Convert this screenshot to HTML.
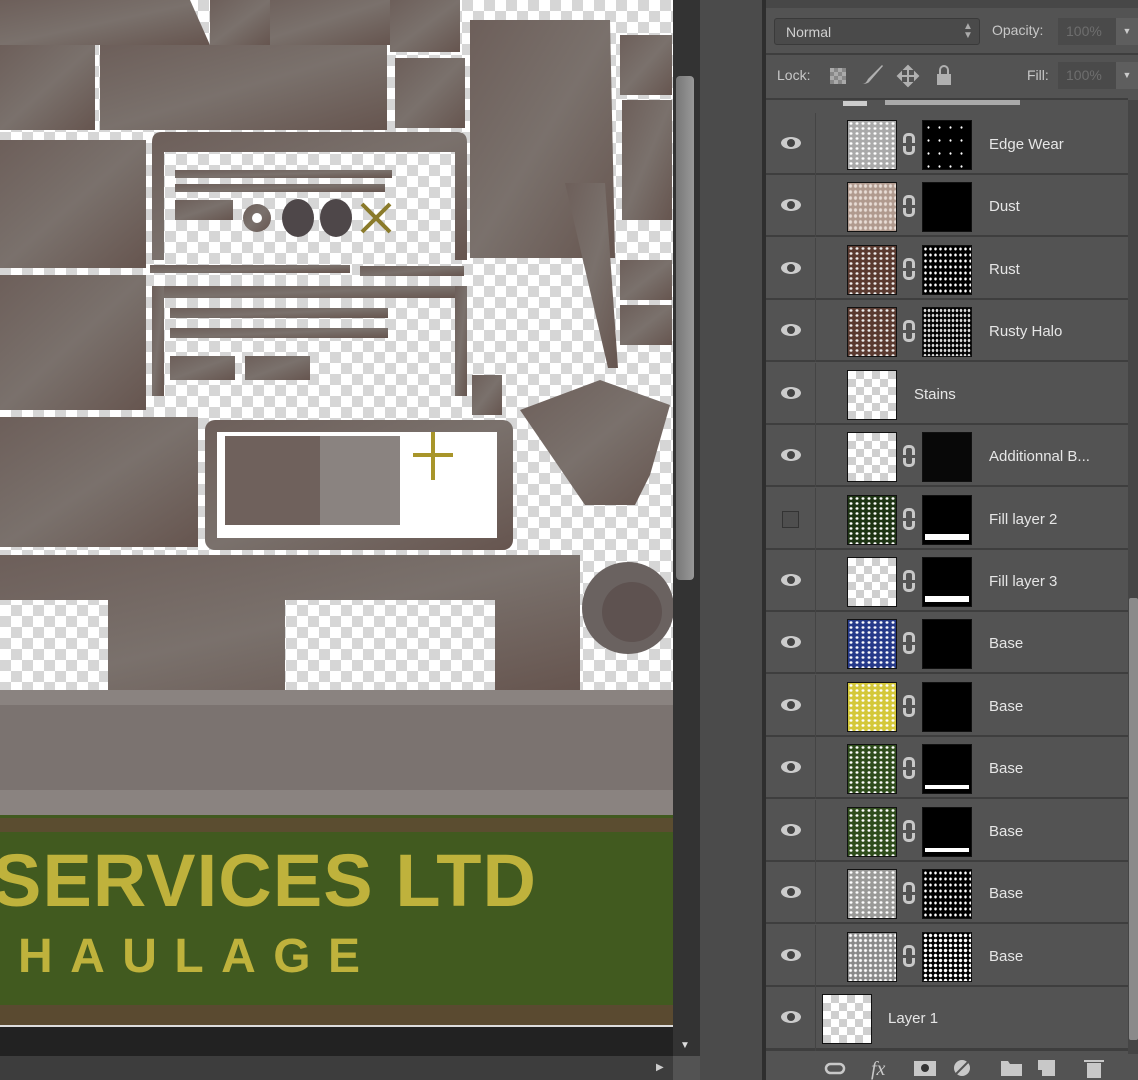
<!DOCTYPE html>
<html><head><meta charset="utf-8"><style>
*{margin:0;padding:0;box-sizing:border-box}
body{width:1138px;height:1080px;overflow:hidden;background:#535353;position:relative;font-family:"Liberation Sans",sans-serif}
.a{position:absolute}
.row{position:absolute;left:766px;width:362px;height:62px;border-bottom:2px solid #3e3e3e;background:#535353}
.eye{position:absolute;left:14px;top:22px;width:22px;height:16px}
.vl{position:absolute;left:49px;top:0;width:1px;height:62px;background:#444}
.th{position:absolute;left:81px;top:7px;width:50px;height:50px;border:1px solid #111}
.mk{position:absolute;left:156px;top:7px;width:50px;height:50px;background:#000;border:1px solid #111}
.ch{position:absolute;left:137px;top:20px;width:12px;height:22px;border:3px solid #c8c8c8;border-radius:5px}
.ch:after{content:"";position:absolute;left:-3px;top:7px;width:12px;height:3px;background:#535353}
.nm{position:absolute;left:223px;top:23px;color:#e6e6e6;font-size:15px}
.chk{background-color:#fff;background-image:repeating-conic-gradient(#cfcfcf 0 25%,#fff 0 50%);background-size:16px 16px}
.btn{position:absolute;background:#4a4a4a;border:1px solid #3a3a3a;border-radius:3px}
</style></head><body>
<svg class="a" style="left:0;top:0" width="673" height="1056" viewBox="0 0 673 1056">
<defs>
<pattern id="ck" width="22" height="22" patternUnits="userSpaceOnUse"><rect width="22" height="22" fill="#fff"/><rect width="11" height="11" fill="#d6d6d6"/><rect x="11" y="11" width="11" height="11" fill="#d6d6d6"/></pattern>
<linearGradient id="gr" x1="0" y1="0" x2="1" y2="1"><stop offset="0" stop-color="#6d5f5a"/><stop offset=".5" stop-color="#7a716c"/><stop offset="1" stop-color="#66554f"/></linearGradient>
</defs>
<rect width="673" height="1056" fill="#222"/>
<rect width="673" height="1027" fill="url(#ck)"/>
<g fill="url(#gr)">
<path d="M0 0h190l20 45h-210z"/><path d="M270 0h120v45h-140z"/><path d="M210 0h60v45h-60z"/>
<rect x="390" y="0" width="70" height="52"/><rect x="395" y="58" width="70" height="70"/>
<rect x="0" y="45" width="95" height="85"/><rect x="100" y="45" width="287" height="85"/>
<path d="M470 20h140l5 238h-145z"/><rect x="620" y="35" width="52" height="60"/>
<rect x="622" y="100" width="50" height="120"/>
<rect x="0" y="140" width="146" height="128"/>
<path d="M152 142q0-10 10-10h295q10 0 10 10v118h-12v-108h-291v108h-12z"/>
<rect x="175" y="170" width="217" height="8"/><rect x="175" y="184" width="210" height="8"/>
<rect x="175" y="200" width="58" height="20"/>
<circle cx="257" cy="218" r="14"/><ellipse cx="298" cy="218" rx="16" ry="19" fill="#4e4749"/><ellipse cx="336" cy="218" rx="16" ry="19" fill="#4e4749"/>
<rect x="152" y="286" width="315" height="12" rx="8"/><rect x="152" y="286" width="12" height="110"/><rect x="455" y="286" width="12" height="110"/>
<rect x="150" y="265" width="200" height="8"/><rect x="360" y="266" width="104" height="10"/>
<rect x="170" y="308" width="218" height="10"/><rect x="170" y="328" width="218" height="10"/>
<rect x="170" y="356" width="65" height="24"/><rect x="245" y="356" width="65" height="24"/>
<rect x="0" y="275" width="146" height="135"/>
<rect x="0" y="417" width="198" height="130"/>
<rect x="205" y="420" width="308" height="130" rx="10"/>
<path d="M565 183l40 0l13 185h-10z"/><rect x="620" y="260" width="52" height="40"/><rect x="620" y="305" width="52" height="40"/>
<path d="M520 410l80-30l70 25l-20 70l-15 30l-50 0z"/>
<rect x="472" y="375" width="30" height="40"/>
<rect x="0" y="555" width="580" height="135"/>
</g>
<rect x="217" y="432" width="280" height="106" fill="#fff"/>
<rect x="225" y="436" width="95" height="89" fill="#6f615c"/>
<rect x="320" y="436" width="80" height="89" fill="#8a8380"/>
<path d="M433 432v48M413 455h40" stroke="#a8952a" stroke-width="4"/>
<path d="M362 204l28 28M390 204l-28 28" stroke="#8a7a2a" stroke-width="4"/>
<circle cx="257" cy="218" r="5" fill="#fff"/>
<rect x="0" y="600" width="108" height="90" fill="url(#ck)"/><rect x="285" y="600" width="210" height="90" fill="url(#ck)"/>
<circle cx="628" cy="608" r="46" fill="#6a6260"/><circle cx="632" cy="612" r="30" fill="#5e5250"/>
<rect x="0" y="690" width="673" height="125" fill="#8a8380"/>
<rect x="0" y="705" width="673" height="85" fill="#7b7370"/>
<rect x="0" y="815" width="673" height="212" fill="#415a1f"/>
<rect x="0" y="818" width="673" height="14" fill="#5b4d30"/>
<rect x="0" y="1005" width="673" height="20" fill="#5a4a30"/>
<rect x="0" y="1025" width="673" height="2" fill="#ddd"/>
<text x="-8" y="906" fill="#bfb23c" font-family="Liberation Sans" font-weight="bold" font-size="74" textLength="544">SERVICES LTD</text>
<text x="18" y="972" fill="#bfb23c" font-family="Liberation Sans" font-weight="bold" font-size="48" textLength="358" letter-spacing="16">HAULAGE</text>
</svg>
<div class="a" style="left:673px;top:0;width:27px;height:1056px;background:#333"></div>
<div class="a" style="left:676px;top:76px;width:18px;height:504px;background:linear-gradient(90deg,#777,#999);border-radius:4px"></div>
<div class="a" style="left:680px;top:1040px;color:#ddd;font-size:10px">▼</div>
<div class="a" style="left:0;top:1056px;width:673px;height:24px;background:#3d3d3d"></div>
<div class="a" style="left:656px;top:1062px;color:#ccc;font-size:10px">▶</div>
<div class="a" style="left:700px;top:0;width:62px;height:1080px;background:#4b4b4b"></div>
<div class="a" style="left:762px;top:0;width:4px;height:1080px;background:#2e2e2e"></div>
<div class="a" style="left:766px;top:0;width:372px;height:1080px;background:#535353"></div>
<div class="a" style="left:766px;top:0;width:372px;height:8px;background:#474747"></div>
<div class="btn" style="left:774px;top:18px;width:206px;height:27px"><span class="a" style="left:11px;top:5px;color:#d0d0d0;font-size:14px">Normal</span><span class="a" style="left:188px;top:3px;color:#aaa;font-size:10px;line-height:9px">▲<br>▼</span></div>
<span class="a" style="left:992px;top:22px;color:#c8c8c8;font-size:14px">Opacity:</span>
<div class="a" style="left:1058px;top:18px;width:58px;height:27px;background:#4a4a4a"><span class="a" style="left:8px;top:5px;color:#6e6e6e;font-size:14px">100%</span></div>
<div class="a" style="left:1116px;top:18px;width:22px;height:27px;background:#5e5e5e;color:#ccc;font-size:9px;text-align:center;line-height:27px">▼</div>
<div class="a" style="left:766px;top:53px;width:372px;height:2px;background:#3e3e3e"></div>
<span class="a" style="left:777px;top:67px;color:#c8c8c8;font-size:14px">Lock:</span>
<div class="a" style="left:830px;top:68px;width:16px;height:16px;background:repeating-conic-gradient(#888 0 25%,#aaa 0 50%) 0 0/8px 8px"></div>
<svg class="a" style="left:858px;top:64px" width="130" height="24"><path d="M4 20q4 0 6-5l14-14l1 1l-13 15q-2 3-8 3z" fill="#b0b0b0"/><path d="M50 2v20M40 12h20M50 2l-3 3h6zM50 22l-3-3h6zM40 12l3-3v6zM60 12l-3-3v6z" stroke="#b0b0b0" stroke-width="2" fill="#b0b0b0"/><rect x="79" y="10" width="14" height="11" fill="#b0b0b0"/><path d="M82 10v-4a4 4 0 0 1 8 0v4" stroke="#b0b0b0" stroke-width="2" fill="none"/></svg>
<span class="a" style="left:1027px;top:67px;color:#c8c8c8;font-size:14px">Fill:</span>
<div class="a" style="left:1058px;top:62px;width:58px;height:27px;background:#4a4a4a"><span class="a" style="left:8px;top:5px;color:#6e6e6e;font-size:14px">100%</span></div>
<div class="a" style="left:1116px;top:62px;width:22px;height:27px;background:#5e5e5e;color:#ccc;font-size:9px;text-align:center;line-height:27px">▼</div>
<div class="a" style="left:766px;top:98px;width:362px;height:2px;background:#3e3e3e"></div>
<div class="a" style="left:843px;top:101px;width:24px;height:5px;background:#ccc"></div>
<div class="a" style="left:885px;top:100px;width:135px;height:5px;background:#aaa"></div>
<div class="a" style="left:1128px;top:100px;width:10px;height:955px;background:#454545"></div>
<div class="a" style="left:1129px;top:598px;width:9px;height:442px;background:#8a8a8a;border-radius:2px"></div>

<div class="row" style="top:113px"><svg class="eye" viewBox="0 0 22 16"><ellipse cx="11" cy="8" rx="10" ry="6" fill="#ccc"/><circle cx="11" cy="8" r="4" fill="#444"/></svg><div class="vl"></div><div class="th" style="background:#aaa;background-image:radial-gradient(#fff 1px,transparent 2px);background-size:6px 5px"></div><div class="ch"></div><div class="mk" style="background-image:radial-gradient(#fff .8px,transparent 1.2px);background-size:11px 13px"></div><span class="nm">Edge Wear</span></div>
<div class="row" style="top:175px"><svg class="eye" viewBox="0 0 22 16"><ellipse cx="11" cy="8" rx="10" ry="6" fill="#ccc"/><circle cx="11" cy="8" r="4" fill="#444"/></svg><div class="vl"></div><div class="th" style="background:#b09a8e;background-image:radial-gradient(#e8ddd6 1px,transparent 2px);background-size:5px 6px"></div><div class="ch"></div><div class="mk"></div><span class="nm">Dust</span></div>
<div class="row" style="top:238px"><svg class="eye" viewBox="0 0 22 16"><ellipse cx="11" cy="8" rx="10" ry="6" fill="#ccc"/><circle cx="11" cy="8" r="4" fill="#444"/></svg><div class="vl"></div><div class="th" style="background:#5a3a30;background-image:radial-gradient(#eee 1px,transparent 2px);background-size:6px 5px"></div><div class="ch"></div><div class="mk" style="background-image:radial-gradient(#fff 1px,transparent 1.5px);background-size:5px 6px"></div><span class="nm">Rust</span></div>
<div class="row" style="top:300px"><svg class="eye" viewBox="0 0 22 16"><ellipse cx="11" cy="8" rx="10" ry="6" fill="#ccc"/><circle cx="11" cy="8" r="4" fill="#444"/></svg><div class="vl"></div><div class="th" style="background:#5a3a30;background-image:radial-gradient(#eee 1px,transparent 2px);background-size:6px 5px"></div><div class="ch"></div><div class="mk" style="background-image:radial-gradient(#ddd 1px,transparent 1.6px);background-size:4px 5px"></div><span class="nm">Rusty Halo</span></div>
<div class="row" style="top:363px"><svg class="eye" viewBox="0 0 22 16"><ellipse cx="11" cy="8" rx="10" ry="6" fill="#ccc"/><circle cx="11" cy="8" r="4" fill="#444"/></svg><div class="vl"></div><div class="th chk"></div><span class="nm" style="left:148px">Stains</span></div>
<div class="row" style="top:425px"><svg class="eye" viewBox="0 0 22 16"><ellipse cx="11" cy="8" rx="10" ry="6" fill="#ccc"/><circle cx="11" cy="8" r="4" fill="#444"/></svg><div class="vl"></div><div class="th chk"></div><div class="ch"></div><div class="mk" style="background:#080808"></div><span class="nm">Additionnal B...</span></div>
<div class="row" style="top:488px"><div class="a" style="left:16px;top:23px;width:17px;height:17px;border:1px solid #333;background:#4e4e4e"></div><div class="vl"></div><div class="th" style="background:#1e3414;background-image:radial-gradient(#fff 1px,transparent 2px);background-size:6px 5px"></div><div class="ch"></div><div class="mk"><div class="a" style="left:2px;bottom:4px;width:44px;height:6px;background:#fff"></div></div><span class="nm">Fill layer 2</span></div>
<div class="row" style="top:550px"><svg class="eye" viewBox="0 0 22 16"><ellipse cx="11" cy="8" rx="10" ry="6" fill="#ccc"/><circle cx="11" cy="8" r="4" fill="#444"/></svg><div class="vl"></div><div class="th chk"></div><div class="ch"></div><div class="mk"><div class="a" style="left:2px;bottom:4px;width:44px;height:6px;background:#fff"></div></div><span class="nm">Fill layer 3</span></div>
<div class="row" style="top:612px"><svg class="eye" viewBox="0 0 22 16"><ellipse cx="11" cy="8" rx="10" ry="6" fill="#ccc"/><circle cx="11" cy="8" r="4" fill="#444"/></svg><div class="vl"></div><div class="th" style="background:#263a8a;background-image:radial-gradient(#fff 1px,transparent 2px);background-size:6px 5px"></div><div class="ch"></div><div class="mk"></div><span class="nm">Base</span></div>
<div class="row" style="top:675px"><svg class="eye" viewBox="0 0 22 16"><ellipse cx="11" cy="8" rx="10" ry="6" fill="#ccc"/><circle cx="11" cy="8" r="4" fill="#444"/></svg><div class="vl"></div><div class="th" style="background:#d4c83a;background-image:radial-gradient(#fff 1px,transparent 2px);background-size:6px 5px"></div><div class="ch"></div><div class="mk"></div><span class="nm">Base</span></div>
<div class="row" style="top:737px"><svg class="eye" viewBox="0 0 22 16"><ellipse cx="11" cy="8" rx="10" ry="6" fill="#ccc"/><circle cx="11" cy="8" r="4" fill="#444"/></svg><div class="vl"></div><div class="th" style="background:#2f4d1c;background-image:radial-gradient(#fff 1px,transparent 2px);background-size:6px 5px"></div><div class="ch"></div><div class="mk"><div class="a" style="left:2px;bottom:4px;width:44px;height:4px;background:#fff"></div></div><span class="nm">Base</span></div>
<div class="row" style="top:800px"><svg class="eye" viewBox="0 0 22 16"><ellipse cx="11" cy="8" rx="10" ry="6" fill="#ccc"/><circle cx="11" cy="8" r="4" fill="#444"/></svg><div class="vl"></div><div class="th" style="background:#2f4d1c;background-image:radial-gradient(#fff 1px,transparent 2px);background-size:6px 5px"></div><div class="ch"></div><div class="mk"><div class="a" style="left:2px;bottom:4px;width:44px;height:4px;background:#fff"></div></div><span class="nm">Base</span></div>
<div class="row" style="top:862px"><svg class="eye" viewBox="0 0 22 16"><ellipse cx="11" cy="8" rx="10" ry="6" fill="#ccc"/><circle cx="11" cy="8" r="4" fill="#444"/></svg><div class="vl"></div><div class="th" style="background:#9a9a98;background-image:radial-gradient(#fff 1px,transparent 2px);background-size:6px 5px"></div><div class="ch"></div><div class="mk" style="background-image:radial-gradient(#fff 1px,transparent 1.5px);background-size:5px 6px"></div><span class="nm">Base</span></div>
<div class="row" style="top:925px"><svg class="eye" viewBox="0 0 22 16"><ellipse cx="11" cy="8" rx="10" ry="6" fill="#ccc"/><circle cx="11" cy="8" r="4" fill="#444"/></svg><div class="vl"></div><div class="th" style="background:#888;background-image:radial-gradient(#fff 1px,transparent 2px);background-size:5px 5px"></div><div class="ch"></div><div class="mk" style="background-image:radial-gradient(#fff 1.4px,transparent 2px);background-size:5px 5px"></div><span class="nm">Base</span></div>
<div class="row" style="top:987px;height:64px;border-bottom:3px solid #3e3e3e"><svg class="eye" viewBox="0 0 22 16"><ellipse cx="11" cy="8" rx="10" ry="6" fill="#ccc"/><circle cx="11" cy="8" r="4" fill="#444"/></svg><div class="vl" style="height:64px"></div><div class="th chk" style="left:56px"></div><span class="nm" style="left:122px">Layer 1</span></div>
<div class="a" style="left:766px;top:1054px;width:372px;height:26px;background:#535353"></div>
<svg class="a" style="left:820px;top:1056px" width="300" height="24"><g fill="#c8c8c8" stroke="#c8c8c8"><rect x="6" y="8" width="18" height="9" rx="4.5" fill="none" stroke-width="2.5"/><text x="51" y="19" font-family="Liberation Serif" font-style="italic" font-size="20" stroke="none">fx</text><rect x="94" y="5" width="22" height="15" stroke="none"/><circle cx="105" cy="12" r="4" fill="#333" stroke="none"/><circle cx="142" cy="12" r="8" stroke="none"/><path d="M136 18l12-12" stroke="#555" stroke-width="2"/><path d="M181 5h7l2 3h12v12h-21z" stroke="none"/><path d="M218 4h17v16h-13v-6h-4z" stroke="none"/><rect x="267" y="7" width="14" height="15" stroke="none"/><rect x="264" y="4" width="20" height="2" stroke="none"/></g></svg>
</body></html>
